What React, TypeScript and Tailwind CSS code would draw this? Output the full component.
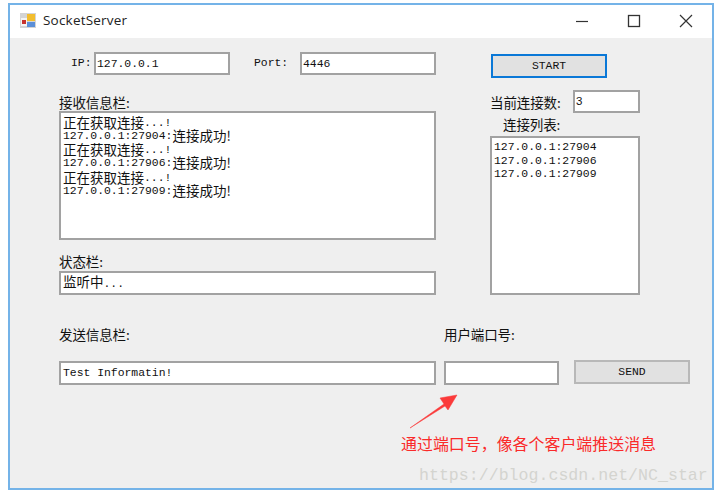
import React from 'react';

const mono = "font-['Liberation_Mono','Noto_Sans_CJK_SC',monospace] text-[11.4px] text-[#111]";
const cjk = "font-['Noto_Sans_CJK_SC',sans-serif] text-[13.5px] leading-[14px] text-[#111]";

// WinForms style sunken text box
const Box = ({ className, children }: { className: string; children?: React.ReactNode }) => (
  <div className={`border-2 border-[#a2a2a2] bg-white pl-[1px] ${className}`}>{children}</div>
);

const Cn = ({ children }: { children: React.ReactNode }) => (
  <span className={`${cjk} block whitespace-pre tracking-[-0.1px]`}>{children}</span>
);

const LogLine = ({ addr }: { addr: string }) => (
  <>
    <div className="flex items-start h-[13px] whitespace-pre">
      <span className={cjk}>正在获取连接</span>
      <span className={`${mono} leading-[12px] pt-[2px]`}>...!</span>
    </div>
    <div className="flex items-start h-[14.33px] whitespace-pre">
      <span className={`${mono} leading-[12px] pt-[2px]`}>{addr}:</span>
      <span className={cjk}>连接成功!</span>
    </div>
  </>
);

const AppIcon = () => (
  <svg width="16" height="15" viewBox="0 0 16 15">
    <rect x="0" y="0" width="16" height="15" fill="#d4d4d4" />
    <rect x="1" y="5" width="6" height="8" fill="#f4f4f4" />
    <rect x="2" y="7" width="4" height="4" fill="#c8322c" />
    <rect x="7" y="1" width="8" height="7" fill="#f2bd2e" />
    <rect x="7" y="9" width="8" height="5" fill="#5b8fd8" />
  </svg>
);

export default function App() {
  return (
    <div className="w-[720px] h-[495px] bg-white pt-[3px] pl-[8px]">
      <div className="w-[706px] h-[487px] border-2 border-[#74b3e8] flex flex-col relative">
        <div className="h-[33px] bg-white flex items-center pl-[10px] pb-[2px] shrink-0">
          <AppIcon />
          <span className="ml-[7px] font-['Open_Sans',sans-serif] text-[13.5px] text-[#222] tracking-[0.2px]">SocketServer</span>
          <div className="ml-auto flex items-center text-[#222]">
            <svg width="14" height="14" viewBox="0 0 14 14" className="mr-[38px]">
              <path d="M1 7.5H13" stroke="#333" strokeWidth="1.2" />
            </svg>
            <svg width="14" height="14" viewBox="0 0 14 14" className="mr-[38px]">
              <rect x="1.5" y="1.5" width="11" height="11" fill="none" stroke="#333" strokeWidth="1.3" />
            </svg>
            <svg width="14" height="14" viewBox="0 0 14 14" className="mr-[19px]">
              <path d="M1 1L13 13M13 1L1 13" stroke="#333" strokeWidth="1.2" />
            </svg>
          </div>
        </div>

        <div className="flex-1 bg-[#efefef] pl-[49px] pt-[14px]">
          <div className="flex">
            <div className="w-[377px]">
              <div className="flex items-center h-[23px]">
                <span className={`${mono} ml-[12px] w-[23px]`}>IP:</span>
                <Box className="w-[136px] h-[23px] leading-[15px]"><span className={mono}>127.0.0.1</span></Box>
                <span className={`${mono} ml-[24px] w-[46px]`}>Port:</span>
                <Box className="w-[136px] h-[23px] leading-[15px]"><span className={mono}>4446</span></Box>
              </div>
              <div className="mt-[20px] h-[16px]"><Cn>接收信息栏:</Cn></div>
              <Box className="h-[129px] pl-[2px] pt-[2px] w-[377px]">
                <LogLine addr="127.0.0.1:27904" />
                <LogLine addr="127.0.0.1:27906" />
                <LogLine addr="127.0.0.1:27909" />
              </Box>
              <div className="mt-[14px] h-[17px]"><Cn>状态栏:</Cn></div>
              <Box className="h-[24px] w-[377px] leading-[17px] pl-[2px]">
                <span className={cjk}>监听中<span className={mono}>...</span></span>
              </Box>
            </div>

            <div className="ml-[54px] w-[150px]">
              <button className={`${mono} ml-[1px] mt-[2px] pt-[1px] block w-[116px] h-[24px] border-2 border-[#0a78d7] bg-[#e1e1e1]`}>START</button>
              <div className="flex items-center mt-[12px] h-[23px]">
                <span className="w-[83px]"><Cn>当前连接数:</Cn></span>
                <Box className="w-[67px] h-[23px] leading-[15px]"><span className="font-['Liberation_Sans',sans-serif] text-[11.5px] text-[#111]">3</span></Box>
              </div>
              <div className="mt-[4px] h-[19px] pl-[13px]"><Cn>连接列表:</Cn></div>
              <Box className="w-[150px] h-[159px] pl-[2px] pt-[3px]">
                <div className={`${mono} leading-[13.6px]`}>127.0.0.1:27904</div>
                <div className={`${mono} leading-[13.6px]`}>127.0.0.1:27906</div>
                <div className={`${mono} leading-[13.6px]`}>127.0.0.1:27909</div>
              </Box>
            </div>
          </div>

          <div className="flex mt-[32px] h-[16px]">
            <div className="w-[385px]"><Cn>发送信息栏:</Cn></div>
            <Cn>用户端口号:</Cn>
          </div>
          <div className="flex items-start mt-[18px]">
            <Box className="w-[377px] h-[24px] leading-[15px] pl-[2px]"><span className={mono}>Test Informatin!</span></Box>
            <Box className="ml-[8px] w-[115px] h-[24px]" />
            <button className={`${mono} ml-[15px] -mt-[1px] pt-[1px] w-[116px] h-[24px] border-2 border-[#b8b8b8] bg-[#e1e1e1]`}>SEND</button>
          </div>
        </div>

        {/* red annotation and blog watermark lie over the screenshot */}
        <svg width="52" height="38" viewBox="0 0 52 38" className="absolute left-[399px] top-[388px]">
          <path d="M1 35L35 11L31 5L48 2L39 17L36 13Z" fill="#fb3a3a" stroke="#fb3a3a" strokeWidth="0.5" />
        </svg>
        <span className="absolute left-[391px] top-[426px] font-['Noto_Sans_CJK_SC',sans-serif] text-[15.95px] leading-[24px] text-[#fa2a2a] whitespace-nowrap">{'通过端口号\uFF0C像各个客户端推送消息'}</span>
        <span className="absolute left-[409px] top-[459px] font-['Liberation_Mono',monospace] text-[16.6px] leading-[24px] text-[#d4d4cf] whitespace-nowrap">https://blog.csdn.net/NC_star</span>
      </div>
    </div>
  );
}
